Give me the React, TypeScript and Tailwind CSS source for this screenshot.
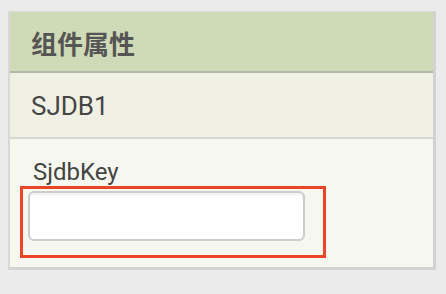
export default function App() {
  return (
    <div className="h-[294px] w-[446px] overflow-hidden bg-[#ebebeb] pl-2 pt-[11px] font-['Roboto','Noto_Sans_CJK_SC',sans-serif]">
      <div className="w-[428px] border-2 border-t-[1px] border-[#d8d8d8] border-r-[3px] border-r-[#d2d2d2] border-b-[3px] border-b-[#d4d4d4]">
        {/* Header */}
        <div className="flex h-[61px] items-center border-b-2 border-[#b4b8a8] bg-[#cfdbb6] pl-[21px] pt-[8px]">
          <span className="text-[26px] font-bold text-[#555555]">组件属性</span>
        </div>

        {/* Component name */}
        <div className="flex h-[66px] items-center border-b-2 border-[#d6d6d6] bg-[#f0f1e4] pl-[21px] pt-[2px]">
          <span className="text-[26px] text-[#454545]">SJDB1</span>
        </div>

        {/* Property */}
        <div className="h-[128px] bg-[#f6f8f0] pl-[10px] pt-[20px]">
          <div className="pl-[13px] text-[24px] leading-[27px] text-[#444444]">SjdbKey</div>
          <div className="w-[306px] border-[3px] border-[#ec4426] pb-[14px] pl-[5px] pr-[18px] pt-[2px]">
            <input
              type="text"
              className="block h-[50px] w-[277px] rounded-[6px] border-2 border-[#cccccc] bg-white shadow-[inset_0_2px_2px_rgba(0,0,0,0.06)] outline-none"
            />
          </div>
        </div>
      </div>
    </div>
  )
}
